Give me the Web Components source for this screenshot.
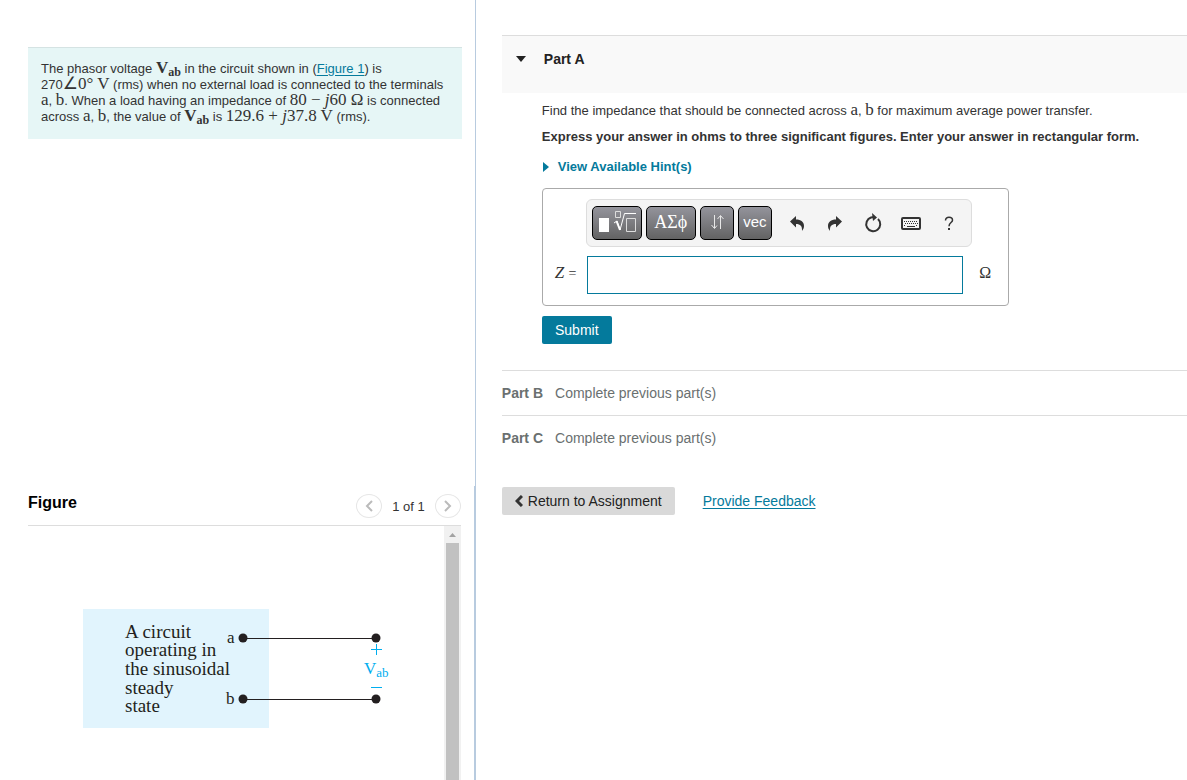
<!DOCTYPE html>
<html lang="en">
<head>
<meta charset="utf-8">
<title>Part A</title>
<style>
    body {
        margin: 0;
        font-family: 'Liberation Sans', Arial, sans-serif;
        font-size: 13px;
        line-height: 16px;
        color: #333;
        background: #fff;
        --teal: #047a9c;
        --rule: #ddd;
        --divider: #b8cbdf;
    }
</style>
</head>
<body>
<assignment-page>
    <problem-intro slot="problem">
        The phasor voltage <math-text bold sub="ab">V</math-text> in the circuit shown in (<text-link>Figure 1</text-link>) is<br>
        270<math-text>∠0° V</math-text> (rms) when no external load is connected to the terminals<br>
        <math-text>a</math-text>, <math-text>b</math-text>. When a load having an impedance of <math-text>80 − <i>j</i>60 Ω</math-text> is connected<br>
        across <math-text>a</math-text>, <math-text>b</math-text>, the value of <math-text bold sub="ab">V</math-text> is <math-text>129.6 + <i>j</i>37.8 V</math-text> (rms).
    </problem-intro>
    <figure-viewer slot="figure" position="1 of 1">
        <circuit-figure></circuit-figure>
    </figure-viewer>
    <question-part name="Part A">
        <span slot="question">Find the impedance that should be connected across <math-text>a</math-text>, <math-text>b</math-text> for maximum average power transfer.</span>
        <span slot="instructions">Express your answer in ohms to three significant figures. Enter your answer in rectangular form.</span>
        <answer-box symbol="Z" unit="Ω"></answer-box>
    </question-part>
    <pending-part name="Part B">Complete previous part(s)</pending-part>
    <pending-part name="Part C">Complete previous part(s)</pending-part>
    <page-actions></page-actions>
</assignment-page>

<script>
class AssignmentPage extends HTMLElement {
    constructor() {
        super();
        this.attachShadow({mode: 'open'});
    }

    connectedCallback() {
        this.shadowRoot.innerHTML = `
            <style>
            :host {
                display: flex;
                height: 100vh;
            }

            aside {
                flex: none;
                width: calc(40% + 1px);
                display: flex;
                flex-direction: column;
                box-sizing: border-box;
            }

            .problem {
                flex: 1;
                padding: 47px 13px 0 28px;
                border-right: 1px solid var(--divider);
                overflow: hidden;
            }

            .figure {
                flex: none;
                height: 294px;
                display: flex;
                padding: 0 13px 0 28px;
                border-right: 2px solid var(--divider);
            }

            main {
                flex: 1;
                min-width: 0;
                padding: 35px 0 0 26px;
                overflow: hidden;
            }
            </style>
            <aside>
                <div class="problem"><slot name="problem"></slot></div>
                <div class="figure"><slot name="figure"></slot></div>
            </aside>
            <main><slot></slot></main>
        `;
    }
}

class MathText extends HTMLElement {
    constructor() {
        super();
        this.attachShadow({mode: 'open'});
    }

    connectedCallback() {
        const sub = this.getAttribute('sub');

        // no whitespace between the tags, it would show up inside the sentence
        this.shadowRoot.innerHTML = `<style>
            :host {
                display: inline;
                font-family: 'Liberation Serif', 'DejaVu Sans', serif;
                font-size: 17px;
                line-height: 0;
                white-space: nowrap;
            }

            :host([bold]) {
                font-weight: bold;
            }

            sub {
                font-size: 12px;
                line-height: 0;
                vertical-align: -3px;
            }
            </style><slot></slot>${sub ? `<sub>${sub}</sub>` : ''}`;
    }
}

class TextLink extends HTMLElement {
    constructor() {
        super();
        this.attachShadow({mode: 'open'});
    }

    connectedCallback() {
        this.shadowRoot.innerHTML = `<style>
            :host {
                display: inline;
            }

            a {
                color: var(--teal);
                text-decoration: underline;
                text-underline-offset: 2px;
            }
            </style><a href="#"><slot></slot></a>`;
    }
}

class ProblemIntro extends HTMLElement {
    constructor() {
        super();
        this.attachShadow({mode: 'open'});
    }

    connectedCallback() {
        this.shadowRoot.innerHTML = `
            <style>
            :host {
                display: block;
                padding: 13px 13px 14px;
                border-top: 1px solid #d5e3e3;
                background: #e6f6f6;
            }
            </style>
            <slot></slot>
        `;
    }
}

class FigureViewer extends HTMLElement {
    constructor() {
        super();
        this.attachShadow({mode: 'open'});
    }

    connectedCallback() {
        const position = this.getAttribute('position') || '1 of 1';

        this.shadowRoot.innerHTML = `
            <style>
            :host {
                flex: 1;
                display: flex;
                flex-direction: column;
                min-width: 0;
            }

            header {
                display: flex;
                align-items: center;
                height: 39px;
                border-bottom: 1px solid var(--rule);
            }

            h2 {
                flex: 1;
                margin: 0;
                padding-bottom: 6px;
                font-size: 16px;
                line-height: 16px;
                color: #000;
            }

            nav {
                display: flex;
                align-items: center;
                gap: 10px;
            }

            nav span {
                padding-top: 2px;
            }

            nav button {
                display: flex;
                align-items: center;
                justify-content: center;
                width: 26px;
                height: 24px;
                padding: 0;
                border: 1px solid #e6e6e6;
                border-radius: 50%;
                background: #fff;
            }

            .view {
                flex: 1;
                display: flex;
                min-height: 0;
            }

            .content {
                flex: 1;
                min-width: 0;
                padding: 83px 0 0 55px;
                overflow: hidden;
            }

            .scrollbar {
                display: flex;
                flex-direction: column;
                align-items: center;
                width: 17px;
                background: #f1f1f1;
            }

            .thumb {
                flex: 1;
                width: 13px;
                background: #c1c1c1;
            }
            </style>
            <header>
                <h2>Figure</h2>
                <nav>
                    <button type="button" aria-label="Previous figure">
                        <svg width="8" height="12" fill="none" stroke="#bbb" stroke-width="2"><path d="M7 1 2 6l5 5"/></svg>
                    </button>
                    <span>${position}</span>
                    <button type="button" aria-label="Next figure">
                        <svg width="8" height="12" fill="none" stroke="#bbb" stroke-width="2"><path d="m1 1 5 5-5 5"/></svg>
                    </button>
                </nav>
            </header>
            <div class="view">
                <div class="content"><slot></slot></div>
                <div class="scrollbar">
                    <svg width="17" height="17" fill="#a3a3a3"><path d="M5 11h7L8.500 7z"/></svg>
                    <div class="thumb"></div>
                </div>
            </div>
        `;
    }
}

class CircuitFigure extends HTMLElement {
    constructor() {
        super();
        this.attachShadow({mode: 'open'});
    }

    connectedCallback() {
        this.shadowRoot.innerHTML = `
            <style>
            :host {
                display: block;
            }

            svg {
                display: block;
            }

            text {
                font-family: 'Palatino Linotype', Palatino, 'Liberation Serif', serif;
                font-size: 19px;
                fill: #231f20;
            }

            .terminal {
                font-size: 17px;
            }

            .signal {
                font-size: 17px;
                fill: #00aeef;
            }

            .signal tspan {
                font-size: 13px;
            }
            </style>
            <svg width="310" height="120" viewBox="0 0 310 120">
                <path fill="#e1f4fd" d="M0 0h186v119H0z"/>
                <text x="42" y="29">A circuit</text>
                <text x="42" y="47">operating in</text>
                <text x="42" y="66">the sinusoidal</text>
                <text x="42" y="85">steady</text>
                <text x="42" y="103">state</text>
                <text class="terminal" x="144" y="34">a</text>
                <text class="terminal" x="143" y="95">b</text>
                <g fill="#231f20">
                    <circle cx="160" cy="29" r="4.500"/>
                    <circle cx="293" cy="29" r="4.500"/>
                    <circle cx="160" cy="90" r="4.500"/>
                    <circle cx="293" cy="90" r="4.500"/>
                </g>
                <path stroke="#231f20" d="M160 29.500h133M160 90.500h133"/>
                <path stroke="#00aeef" d="M288 40.500h11M293.500 35v11M288 78.500h11"/>
                <text class="signal" x="281" y="65">V<tspan dy="3">ab</tspan></text>
            </svg>
        `;
    }
}

class QuestionPart extends HTMLElement {
    constructor() {
        super();
        this.attachShadow({mode: 'open'});
    }

    connectedCallback() {
        const name = this.getAttribute('name') || '';

        this.shadowRoot.innerHTML = `
            <style>
            :host {
                display: block;
                padding-bottom: 26px;
            }

            header {
                display: flex;
                align-items: center;
                gap: 18px;
                height: 45px;
                padding: 0 14px 12px;
                border-top: 1px solid var(--rule);
                background: #f9f9f9;
                color: #222;
            }

            h3 {
                margin: 0;
                font-size: 14px;
                line-height: 16px;
            }

            .body {
                padding: 10px 40px 0;
            }

            p {
                margin: 0 0 10px;
            }

            .hints {
                display: flex;
                align-items: center;
                gap: 9px;
                margin: 14px 0 13px;
                padding: 0;
                border: 0;
                background: none;
                font: bold 13px/16px 'Liberation Sans', Arial, sans-serif;
                color: var(--teal);
            }

            .submit {
                display: block;
                min-width: 70px;
                height: 28px;
                margin-top: 10px;
                padding: 0 13px;
                border: 0;
                border-radius: 2px;
                background: var(--teal);
                font: 14px/16px 'Liberation Sans', Arial, sans-serif;
                color: #fff;
            }
            </style>
            <header>
                <svg width="10" height="6" fill="currentColor"><path d="M0 0h10L5 6z"/></svg>
                <h3>${name}</h3>
            </header>
            <div class="body">
                <p><slot name="question"></slot></p>
                <p><b><slot name="instructions"></slot></b></p>
                <button class="hints" type="button">
                    <svg width="7" height="10" fill="currentColor"><path d="M1 0v10l6-5z"/></svg>
                    View Available Hint(s)
                </button>
                <slot></slot>
                <button class="submit" type="submit">Submit</button>
            </div>
        `;
    }
}

class AnswerBox extends HTMLElement {
    constructor() {
        super();
        this.attachShadow({mode: 'open'});
    }

    connectedCallback() {
        const symbol = this.getAttribute('symbol') || 'x';
        const unit = this.getAttribute('unit') || '';

        this.shadowRoot.innerHTML = `
            <style>
            :host {
                display: block;
                box-sizing: border-box;
                width: fit-content;
                max-width: 100%;
                padding: 10px 0 11px;
                border: 1px solid #aaa;
                border-radius: 4px;
            }

            .toolbar {
                display: flex;
                align-items: center;
                gap: 4px;
                height: 46px;
                margin: 0 36px 9px 43px;
                padding: 0 5px;
                border: 1px solid #ddd;
                border-radius: 6px;
                background: #f4f4f4;
            }

            button {
                display: flex;
                align-items: center;
                justify-content: center;
                box-sizing: border-box;
                width: 34px;
                height: 34px;
                padding: 0;
                border: 0;
                background: none;
                font: 16px/16px 'Liberation Sans', Arial, sans-serif;
                color: #333;
            }

            .key {
                padding-bottom: 2px;
                border: 1px solid #000;
                border-radius: 5px;
                background: linear-gradient(#94949c, #636363);
                font-size: 15px;
                color: #fff;
            }

            .wide {
                width: 50px;
            }

            .greek {
                font-family: 'Liberation Serif', serif;
                font-size: 18px;
            }

            .icons {
                display: flex;
                gap: 4px;
                padding-left: 4px;
            }

            .entry {
                display: flex;
                align-items: center;
            }

            label {
                box-sizing: border-box;
                width: 44px;
                padding: 0 0 4px 12px;
                font-family: 'Liberation Serif', serif;
                font-size: 17px;
            }

            label span {
                font-size: 14px;
            }

            input {
                flex: 1;
                min-width: 0;
                box-sizing: border-box;
                height: 38px;
                padding: 0 8px;
                border: 1px solid var(--teal);
                background: #fff;
                font-size: 16px;
                outline: 0;
            }

            .unit {
                width: 45px;
                padding-bottom: 4px;
                text-align: center;
                font-family: 'Liberation Serif', serif;
                font-size: 16px;
            }
            </style>
            <div class="toolbar">
                <button class="key wide" type="button" aria-label="Templates">
                    <svg width="38" height="24" fill="none" stroke="#fff">
                        <path fill="#fff" stroke="none" d="M1 8h10v14H1z"/>
                        <path stroke="#ddd" d="M17.500 1.500h5v6h-5z"/>
                        <path d="M16 13l3-2 3 9 4.500-16.500H38"/>
                        <path stroke-width="2" d="M18.500 11l3.500 9"/>
                        <path stroke="#ddd" d="M28.500 8.500h9v13h-9z"/>
                    </svg>
                </button>
                <button class="key wide greek" type="button">ΑΣϕ</button>
                <button class="key" type="button" aria-label="Arrows">
                    <svg width="14" height="16" fill="none" stroke="#e8e8e8">
                        <path d="M4.500 1v13M1.500 11l3 3.500 2.500-3M10.500 15V2M7.500 5l3-3.500 3 3.500"/>
                    </svg>
                </button>
                <button class="key" type="button">vec</button>
                <div class="icons">
                    <button type="button" aria-label="Undo">
                        <svg width="14" height="15" fill="#333"><path d="M0 5.500 6 0v3.500c5 0 8 2.500 8 6.500 0 2-.800 3.500-2 5 .300-5-1.500-7-6-7v3.500z"/></svg>
                    </button>
                    <button type="button" aria-label="Redo">
                        <svg width="14" height="15" fill="#333"><path d="M14 5.500 8 0v3.500c-5 0-8 2.500-8 6.500 0 2 .800 3.500 2 5-.300-5 1.500-7 6-7v3.500z"/></svg>
                    </button>
                    <button type="button" aria-label="Reset">
                        <svg width="18" height="20" fill="none" stroke="#333" stroke-width="2">
                            <path d="M14 6a7 7 0 1 1-7-1.500l3-.500"/>
                            <path fill="#333" stroke="none" d="M8 0l5 4.500-4 3.500z"/>
                        </svg>
                    </button>
                    <button type="button" aria-label="Keyboard shortcuts">
                        <svg width="20" height="16" fill="none" stroke="#333">
                            <rect x="1" y="3" width="18" height="11" rx="1" stroke-width="2"/>
                            <path stroke-dasharray="1 1" d="M3 6.500h14M4 8.500h13M3 10.500h2M15 10.500h2"/>
                            <path d="M6 11.500h8"/>
                        </svg>
                    </button>
                    <button type="button" aria-label="Help">
                        <svg width="10" height="15" fill="none" stroke="#333" stroke-width="1.500">
                            <path d="M1.500 4.500C1.500 2.500 3 1.200 5 1.200s3.500 1.200 3.500 3C8.500 6.500 5 6.800 5 10.200"/>
                            <path stroke-width="2" d="M4 13h2"/>
                        </svg>
                    </button>
                </div>
            </div>
            <div class="entry">
                <label for="answer"><i>${symbol}</i> <span>=</span></label>
                <input id="answer" type="text" autocomplete="off">
                <span class="unit">${unit}</span>
            </div>
        `;
    }
}

class PendingPart extends HTMLElement {
    constructor() {
        super();
        this.attachShadow({mode: 'open'});
    }

    connectedCallback() {
        const name = this.getAttribute('name') || '';

        this.shadowRoot.innerHTML = `
            <style>
            :host {
                display: flex;
                align-items: center;
                gap: 12px;
                height: 44px;
                border-top: 1px solid var(--rule);
                font-size: 14px;
                color: #6a7070;
            }
            </style>
            <b>${name}</b>
            <span><slot></slot></span>
        `;
    }
}

class PageActions extends HTMLElement {
    constructor() {
        super();
        this.attachShadow({mode: 'open'});
    }

    connectedCallback() {
        this.shadowRoot.innerHTML = `
            <style>
            :host {
                display: flex;
                align-items: center;
                gap: 28px;
                padding-top: 27px;
                font-size: 14px;
            }

            button {
                display: flex;
                align-items: center;
                gap: 5px;
                height: 28px;
                padding: 0 13px;
                border: 0;
                border-radius: 2px;
                background: #d9d9d9;
                font: inherit;
                color: #222;
            }
            </style>
            <button type="button">
                <svg width="8" height="12" fill="none" stroke="#333" stroke-width="3"><path d="M7 1 2 6l5 5"/></svg>
                Return to Assignment
            </button>
            <text-link>Provide Feedback</text-link>
        `;
    }
}

customElements.define('assignment-page', AssignmentPage);
customElements.define('math-text', MathText);
customElements.define('text-link', TextLink);
customElements.define('problem-intro', ProblemIntro);
customElements.define('figure-viewer', FigureViewer);
customElements.define('circuit-figure', CircuitFigure);
customElements.define('question-part', QuestionPart);
customElements.define('answer-box', AnswerBox);
customElements.define('pending-part', PendingPart);
customElements.define('page-actions', PageActions);
</script>
</body>
</html>
